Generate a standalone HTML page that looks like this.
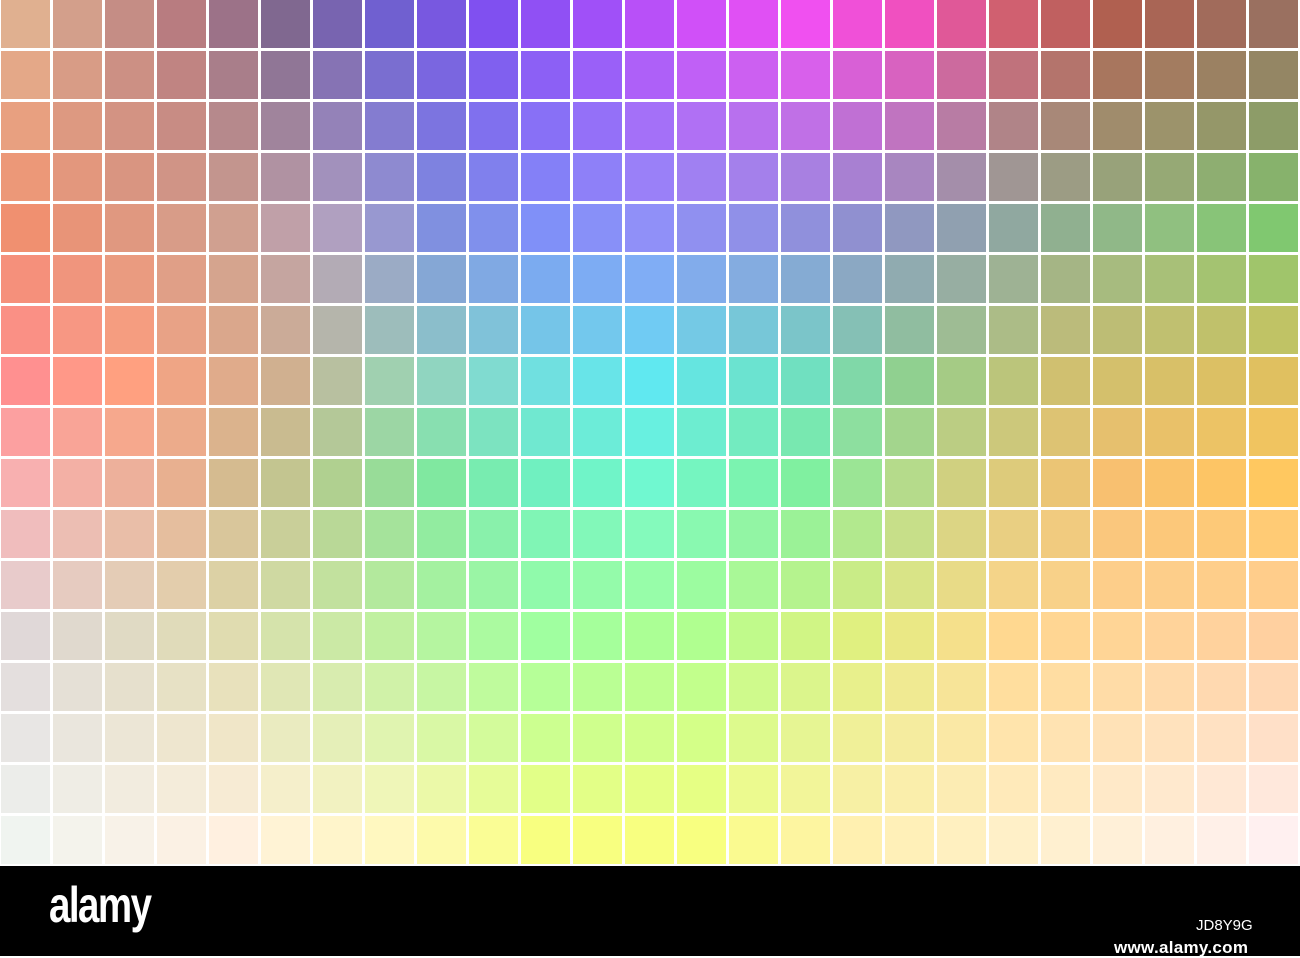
<!DOCTYPE html>
<html><head><meta charset="utf-8"><style>
html,body{margin:0;padding:0;background:#fff;width:1300px;height:956px;overflow:hidden;font-family:"Liberation Sans",sans-serif}
#g{position:absolute;left:0;top:0;width:1300px;height:867px;background:#fff}
.c{position:absolute;width:49px;height:48px}
#bar{position:absolute;left:0;top:866px;width:1300px;height:90px;background:#000;color:#fff}
#logo{position:absolute;left:49px;top:10px;font-size:50px;font-weight:bold;letter-spacing:-2px;transform:scaleX(0.77);transform-origin:left}
#id{position:absolute;left:1196px;top:51px;font-size:15px}
#www{position:absolute;left:1114px;top:72px;font-size:17px;font-weight:bold;letter-spacing:0.3px}
</style></head><body>
<div id="g"></div>
<div id="bar"><div id="logo">alamy</div><div id="id">JD8Y9G</div><div id="www">www.alamy.com</div></div>
<script>
var A={
0:[[0,'e0b090'],[3,'b87c80'],[5,'806890'],[7,'7060d0'],[9,'8050f0'],[11,'a050f8'],[13,'d050f8'],[15,'f050f0'],[17,'f050c0'],[19,'d06070'],[21,'b06050'],[24,'9a7060']],
4:[[0,'f09070'],[4,'d0a090'],[6,'b0a0c0'],[8,'8090e0'],[10,'8090f8'],[12,'9090f8'],[14,'9090e8'],[16,'9090d0'],[18,'90a0b0'],[20,'90b090'],[22,'90c080'],[24,'80c870']],
7:[[0,'ff9090'],[2,'ffa080'],[5,'d0b090'],[7,'a0d0b0'],[10,'70e0e0'],[12,'60e8f0'],[15,'70e0c0'],[17,'90d090'],[20,'d0c070'],[24,'e0c060']],
9:[[0,'f8b0b0'],[3,'e8b090'],[6,'b0d090'],[8,'80e8a0'],[10,'70f0c0'],[12,'70f8d0'],[15,'80f0a0'],[18,'d0d080'],[21,'f8c070'],[24,'ffc860']],
12:[[0,'e0d8d8'],[4,'e0dcb0'],[7,'c0f0a0'],[10,'a0ffa0'],[13,'b0ff90'],[16,'e0f080'],[19,'ffd890'],[24,'ffd0a0']],
16:[[0,'f0f4f0'],[4,'fff0e0'],[7,'fff8c0'],[10,'f8ff80'],[13,'f8ff80'],[16,'fff0b0'],[20,'fff0d0'],[24,'fff0f0']]};
function h(s){return [parseInt(s.substr(0,2),16),parseInt(s.substr(2,2),16),parseInt(s.substr(4,2),16)]}
function row(r,c){var a=A[r];for(var i=0;i<a.length-1;i++){if(c>=a[i][0]&&c<=a[i+1][0]){var t=(c-a[i][0])/(a[i+1][0]-a[i][0]),p=h(a[i][1]),q=h(a[i+1][1]);return p.map(function(v,k){return v+(q[k]-v)*t})}}return h(a[a.length-1][1])}
var keys=[0,4,7,9,12,16],g=document.getElementById('g'),html='';
for(var r=0;r<17;r++)for(var c=0;c<25;c++){var col;for(var i=0;i<keys.length-1;i++){if(r>=keys[i]&&r<=keys[i+1]){var t=(r-keys[i])/(keys[i+1]-keys[i]),p=row(keys[i],c),q=row(keys[i+1],c);col=p.map(function(v,k){return Math.round(v+(q[k]-v)*t)});break}}
html+='<div class="c" style="left:'+(c*52+1)+'px;top:'+(r*51)+'px;background:rgb('+col.join(',')+')"></div>'}
g.innerHTML=html;
</script>
</body></html>
